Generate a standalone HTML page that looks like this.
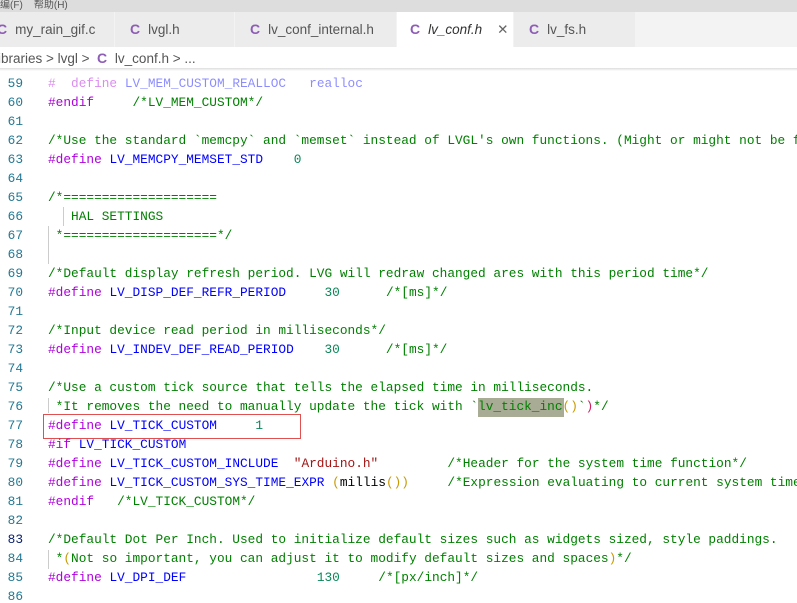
<!DOCTYPE html>
<html><head><meta charset="utf-8">
<style>
html,body{margin:0;padding:0;width:797px;height:603px;overflow:hidden;background:#fff;position:relative;font-family:"Liberation Sans",sans-serif}
.top{position:absolute;left:0;top:0;width:797px;height:12px;background:#dddddd;overflow:hidden}
.tabs{position:absolute;left:0;top:12px;width:797px;height:35px;background:#f3f3f3}
.tab{position:absolute;top:0;height:35px;background:#ececec;border-right:1px solid #f3f3f3;font-size:13.5px;color:#555;line-height:35px;white-space:nowrap;overflow:hidden}
.tab b{color:#8e5db5;font-weight:bold;font-size:14px;margin-right:8px}
.tab.act{background:#fff;color:#333;font-style:italic}
.bc{position:absolute;left:0;top:47px;width:797px;height:22px;font-size:13.5px;color:#555;line-height:22px;white-space:nowrap}
.bc b{color:#8e5db5;font-size:14px;margin-right:4px}
.sh{position:absolute;left:0;top:68px;width:797px;height:3px;background:linear-gradient(#ddd,#fff)}
.w{position:absolute;left:0;top:1px;width:797px;height:603px}
.ln{position:absolute;left:0;width:23px;text-align:right;color:#237893;font-family:"Liberation Mono",monospace;font-size:12.8px;height:19px;line-height:19px}
.cd{position:absolute;left:48px;white-space:pre;font-family:"Liberation Mono",monospace;font-size:12.8px;height:19px;line-height:19px;color:#000}
.c{color:#008000}.d{color:#af00db}.m{color:#0000ff}.n{color:#098658}.s{color:#a31515}.p{color:#c99a00}.f{opacity:.45}
</style></head><body>
<div class="top"><span style="font-size:10px;color:#555;position:absolute;left:0;top:-4px">编(F) &nbsp;&nbsp; 帮助(H)</span></div>
<div class="tabs">
<div class="tab" style="left:0;width:114px;padding-left:0"><b style="margin-left:-3px">C</b>my_rain_gif.c</div>
<div class="tab" style="left:115px;width:119px"><b style="margin-left:15px">C</b>lvgl.h</div>
<div class="tab" style="left:235px;width:161px"><b style="margin-left:15px">C</b>lv_conf_internal.h</div>
<div class="tab act" style="left:397px;width:116px"><b style="margin-left:13px;font-style:normal">C</b>lv_conf.h<span style="font-style:normal;color:#666;margin-left:15px">✕</span></div>
<div class="tab" style="left:514px;width:121px"><b style="margin-left:15px">C</b>lv_fs.h</div>
</div>
<div class="bc" style="left:-2px">ibraries &gt; lvgl &gt; &nbsp;<b>C</b> lv_conf.h &gt; ...</div>
<div class="sh"></div>
<div class="w">
<div style="position:absolute;left:478px;top:397px;width:86px;height:19px;background:#a9ac94"></div>
<div style="position:absolute;left:43px;top:413px;width:258px;height:25px;border:1px solid #e05050;box-sizing:border-box"></div>
<div style="position:absolute;left:48px;top:225px;width:1px;height:38px;background:#ccc"></div>
<div style="position:absolute;left:63px;top:206px;width:1px;height:19px;background:#ccc"></div>
<div style="position:absolute;left:48px;top:397px;width:1px;height:15px;background:#ccc"></div>
<div style="position:absolute;left:48px;top:549px;width:1px;height:19px;background:#ccc"></div>

<div class="ln" style="top:73px">59</div><div class="cd f" style="top:73px"><span class="d">#  define</span> <span class="m">LV_MEM_CUSTOM_REALLOC</span>   <span class="m">realloc</span></div>
<div class="ln" style="top:92px">60</div><div class="cd" style="top:92px"><span class="d">#endif</span>     <span class="c">/*LV_MEM_CUSTOM*/</span></div>
<div class="ln" style="top:111px">61</div>
<div class="ln" style="top:130px">62</div><div class="cd c" style="top:130px">/*Use the standard `memcpy` and `memset` instead of LVGL's own functions. (Might or might not be f</div>
<div class="ln" style="top:149px">63</div><div class="cd" style="top:149px"><span class="d">#define</span> <span class="m">LV_MEMCPY_MEMSET_STD</span>    <span class="n">0</span></div>
<div class="ln" style="top:168px">64</div>
<div class="ln" style="top:187px">65</div><div class="cd c" style="top:187px">/*====================</div>
<div class="ln" style="top:206px">66</div><div class="cd c" style="top:206px">   HAL SETTINGS</div>
<div class="ln" style="top:225px">67</div><div class="cd c" style="top:225px"> *====================*/</div>
<div class="ln" style="top:244px">68</div>
<div class="ln" style="top:263px">69</div><div class="cd c" style="top:263px">/*Default display refresh period. LVG will redraw changed ares with this period time*/</div>
<div class="ln" style="top:282px">70</div><div class="cd" style="top:282px"><span class="d">#define</span> <span class="m">LV_DISP_DEF_REFR_PERIOD</span>     <span class="n">30</span>      <span class="c">/*[ms]*/</span></div>
<div class="ln" style="top:301px">71</div>
<div class="ln" style="top:320px">72</div><div class="cd c" style="top:320px">/*Input device read period in milliseconds*/</div>
<div class="ln" style="top:339px">73</div><div class="cd" style="top:339px"><span class="d">#define</span> <span class="m">LV_INDEV_DEF_READ_PERIOD</span>    <span class="n">30</span>      <span class="c">/*[ms]*/</span></div>
<div class="ln" style="top:358px">74</div>
<div class="ln" style="top:377px">75</div><div class="cd c" style="top:377px">/*Use a custom tick source that tells the elapsed time in milliseconds.</div>
<div class="ln" style="top:396px">76</div><div class="cd c" style="top:396px"> *It removes the need to manually update the tick with `lv_tick_inc<span class="p">()</span>`<span style="color:#d02060">)</span>*/</div>
<div class="ln" style="top:415px">77</div><div class="cd" style="top:415px"><span class="d">#define</span> <span class="m">LV_TICK_CUSTOM</span>     <span class="n">1</span></div>
<div class="ln" style="top:434px">78</div><div class="cd" style="top:434px"><span class="d">#if</span> <span class="m">LV_TICK_CUSTOM</span></div>
<div class="ln" style="top:453px">79</div><div class="cd" style="top:453px"><span class="d">#define</span> <span class="m">LV_TICK_CUSTOM_INCLUDE</span>  <span class="s">"Arduino.h"</span>         <span class="c">/*Header for the system time function*/</span></div>
<div class="ln" style="top:472px">80</div><div class="cd" style="top:472px"><span class="d">#define</span> <span class="m">LV_TICK_CUSTOM_SYS_TIME_EXPR</span> <span class="p">(</span>millis<span class="p">())</span>     <span class="c">/*Expression evaluating to current system time</span></div>
<div class="ln" style="top:491px">81</div><div class="cd" style="top:491px"><span class="d">#endif</span>   <span class="c">/*LV_TICK_CUSTOM*/</span></div>
<div class="ln" style="top:510px">82</div>
<div class="ln" style="top:529px;color:#0b216f">83</div><div class="cd c" style="top:529px">/*Default Dot Per Inch. Used to initialize default sizes such as widgets sized, style paddings.</div>
<div class="ln" style="top:548px">84</div><div class="cd c" style="top:548px"> *<span class="p">(</span>Not so important, you can adjust it to modify default sizes and spaces<span class="p">)</span>*/</div>
<div class="ln" style="top:567px">85</div><div class="cd" style="top:567px"><span class="d">#define</span> <span class="m">LV_DPI_DEF</span>                 <span class="n">130</span>     <span class="c">/*[px/inch]*/</span></div>
<div class="ln" style="top:586px">86</div>
</div>
</body></html>
